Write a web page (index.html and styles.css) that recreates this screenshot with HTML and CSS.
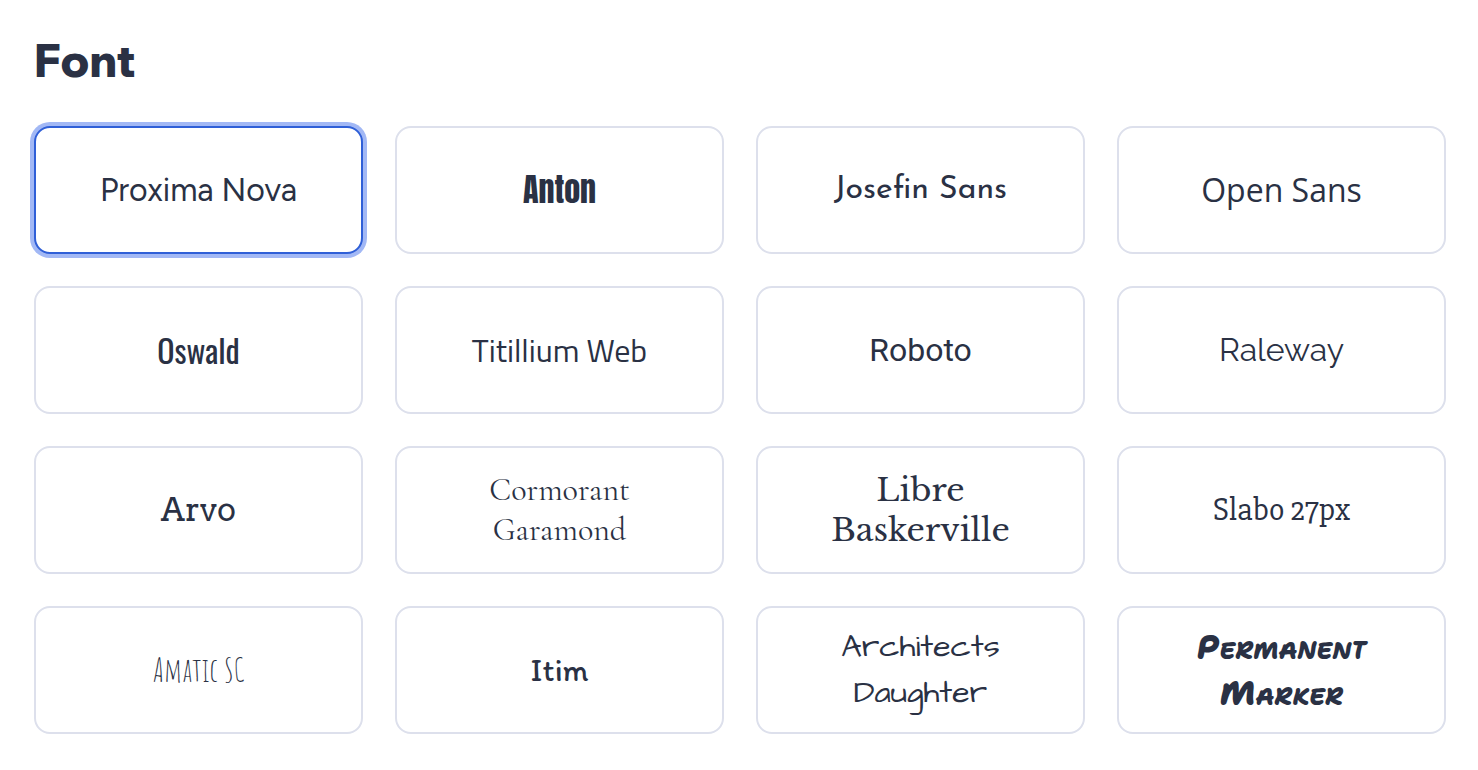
FILE: index.html
```html
<!DOCTYPE html>
<html lang="en">
<head>
    <meta charset="UTF-8">
    <meta name="viewport" content="width=device-width, initial-scale=1.0">
    <title>Font</title>
    <link rel="stylesheet" href="styles.css">
</head>
<body>
    <main class="picker">
        <h1>Font</h1>
        <div class="fonts">
            <button type="button" class="font selected" aria-pressed="true">Proxima Nova</button>
            <button type="button" class="font anton">Anton</button>
            <button type="button" class="font josefin">Josefin Sans</button>
            <button type="button" class="font opensans">Open Sans</button>
            <button type="button" class="font oswald">Oswald</button>
            <button type="button" class="font titillium">Titillium Web</button>
            <button type="button" class="font roboto">Roboto</button>
            <button type="button" class="font raleway">Raleway</button>
            <button type="button" class="font arvo">Arvo</button>
            <button type="button" class="font cormorant">Cormorant<br>Garamond</button>
            <button type="button" class="font baskerville">Libre<br>Baskerville</button>
            <button type="button" class="font slabo">Slabo 27px</button>
            <button type="button" class="font amatic">Amatic SC</button>
            <button type="button" class="font itim">Itim</button>
            <button type="button" class="font architects">Architects<br>Daughter</button>
            <button type="button" class="font marker">Permanent<br>Marker</button>
        </div>
    </main>
</body>
</html>
```
FILE: styles.css
```css
body {
    margin: 0;
    background-color: #fff;
    color: #2a3144;
    font-family: "Proxima Nova", Figtree, Montserrat, Lato, sans-serif;
}
.picker {
    padding: 32px 32px 36px 34px;
}
h1 {
    margin: 0 0 38px;
    font-family: "Proxima Nova", "Wix Madefor Display", Inter, sans-serif;
    font-size: 45px;
    font-weight: 800;
    line-height: 56px;
}
.fonts {
    display: grid;
    grid-template-columns: repeat(4, 1fr);
    gap: 32px;
}
.font {
    min-height: 128px;
    padding: 0 16px;
    border: 2px solid #dde0ec;
    border-radius: 16px;
    background-color: #fff;
    color: inherit;
    font-family: inherit;
    font-size: 32px;
    line-height: 40px;
    cursor: pointer;
}
.selected {
    border-color: #2f5fd7;
    box-shadow: 0 0 0 4px #a2b8f5;
}
.anton {
    font-family: Anton, "Open Sans", sans-serif;
}
.josefin {
    font-family: "Josefin Sans", Lato, sans-serif;
}
.opensans {
    font-family: "Open Sans", sans-serif;
}
.oswald {
    font-family: Oswald, "Liberation Sans Narrow", sans-serif;
}
.titillium {
    font-family: "Titillium Web", "Noto Sans", sans-serif;
}
.roboto {
    font-family: Roboto, sans-serif;
}
.raleway {
    font-family: Raleway, Lato, sans-serif;
}
.arvo {
    font-family: Arvo, "DejaVu Serif", serif;
}
.cormorant {
    font-family: "Cormorant Garamond", "Liberation Serif", serif;
}
.baskerville {
    font-family: "Libre Baskerville", "DejaVu Serif", serif;
}
.slabo {
    font-family: "Slabo 27px", "Liberation Serif", serif;
}
.amatic {
    font-family: "Amatic SC", "Liberation Sans Narrow", sans-serif;
}
.itim {
    font-family: Itim, Lato, sans-serif;
}
.architects {
    font-family: "Architects Daughter", Lato, sans-serif;
    line-height: 46px;
}
.marker {
    font-family: "Shantell Sans", Inter, sans-serif;
    font-size: 34px;
    font-style: italic;
    font-variant: small-caps;
    font-weight: 800;
    line-height: 46px;
}
```
